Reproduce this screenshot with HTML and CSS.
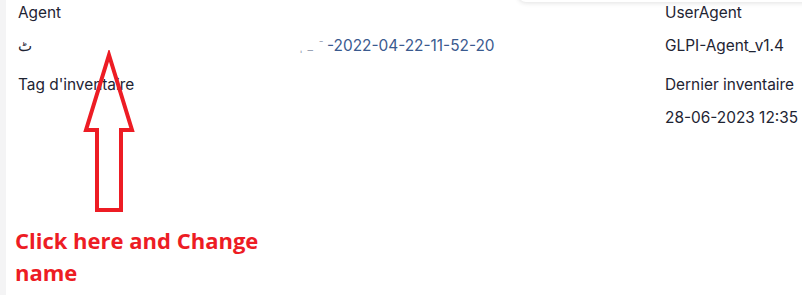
FILE: index.html
```html
<!DOCTYPE html>
<html>
<head>
<meta charset="utf-8">
<link rel="stylesheet" href="styles.css">
</head>
<body>
<div class="page">
  <div class="side"></div>
  <div class="content">
    <div class="grid">
      <div class="field">
        <div class="label">Agent</div>
        <div class="value"><span class="frag">ٹ</span><span class="gap"></span><span class="frag2">ˌ _ ¯</span><span class="link">-2022-04-22-11-52-20</span></div>
      </div>
      <div class="field">
        <div class="label">UserAgent</div>
        <div class="value dark">GLPI-Agent_v1.4</div>
      </div>
      <div class="field">
        <div class="label">Tag d'inventaire</div>
        <div class="value"></div>
      </div>
      <div class="field">
        <div class="label">Dernier inventaire</div>
        <div class="value dark">28-06-2023 12:35</div>
      </div>
    </div>
    <div class="note">Click here and Change<br>name</div>
  </div>
  <div class="dropdown"></div>
  <svg class="arrow" width="60" height="170" viewBox="0 0 60 170">
    <path d="M32 5 L55 80 L44 80 L44 160 L20 160 L20 80 L9 80 Z" fill="none" stroke="#ed1c24" stroke-width="4" stroke-linejoin="miter"/>
  </svg>
</div>
</body>
</html>
```
FILE: styles.css
```css
html, body {
  margin: 0;
  padding: 0;
  background: #ffffff;
}
.page {
  position: relative;
  width: 802px;
  height: 295px;
  overflow: hidden;
  display: flex;
}
.side {
  width: 6px;
  background: #f4f4f5;
  flex: none;
}
.content {
  flex: 1;
  padding: 3px 0 0 12px;
  font-family: Inter, "Noto Sans", sans-serif;
  font-size: 15.4px;
  line-height: 20px;
}
.grid {
  display: grid;
  grid-template-columns: 647px 1fr;
  row-gap: 19px;
}
.label {
  color: #1e2433;
  margin-bottom: 13px;
}
.value {
  height: 20px;
  color: #1e2433;
  white-space: nowrap;
  display: flex;
}
.frag {
  color: #1e2433;
  width: 20px;
}
.gap {
  width: 262px;
}
.frag2 {
  color: #9aa3b5;
  width: 27px;
  letter-spacing: 1px;
  font-size: 12px;
}
.link {
  color: #3a5a8f;
}
.note {
  margin: 96px 0 0 -3px;
  font-family: "Open Sans", sans-serif;
  font-weight: 700;
  font-size: 22px;
  line-height: 32px;
  color: #ed1c24;
}
.dropdown {
  position: absolute;
  left: 518px;
  top: -20px;
  width: 300px;
  height: 22px;
  background: #ffffff;
  border-radius: 0 0 8px 8px;
  box-shadow: 0 1px 5px rgba(0,0,0,0.12);
}
.arrow {
  position: absolute;
  left: 77px;
  top: 50px;
}
```
